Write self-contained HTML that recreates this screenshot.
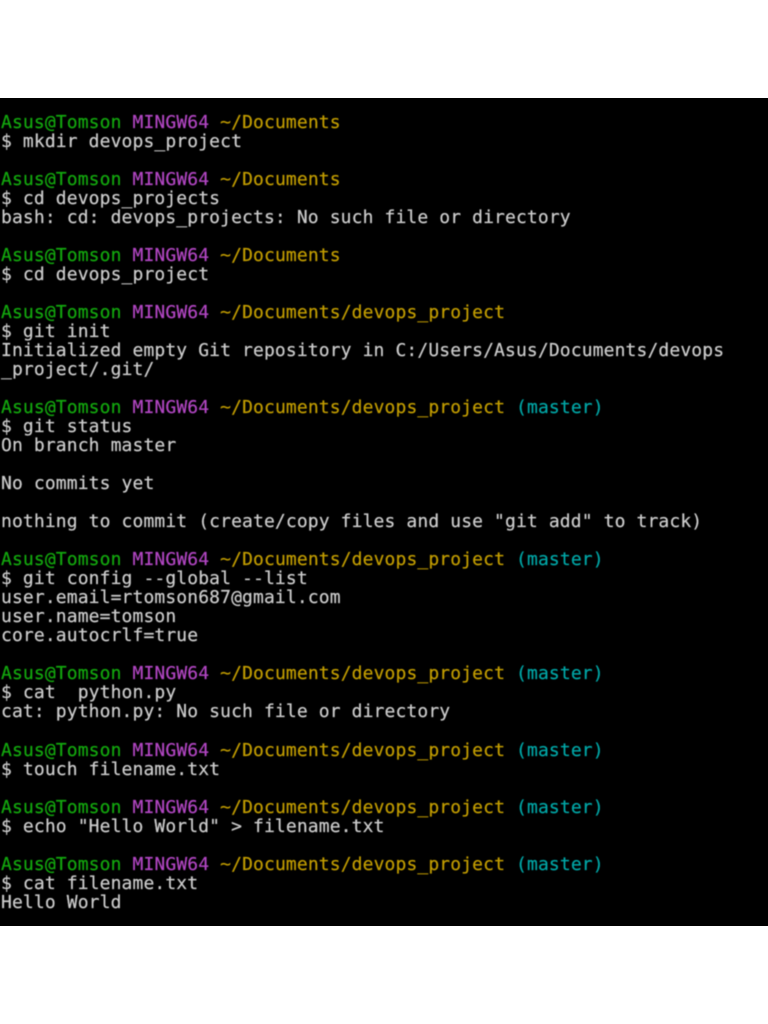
<!DOCTYPE html>
<html>
<head>
<meta charset="utf-8">
<style>
html,body{margin:0;padding:0;background:#fff;width:768px;height:1024px;overflow:hidden}
#t{position:absolute;left:0;top:98px;width:768px;height:828px;background:#000;overflow:hidden}
pre{position:absolute;left:1px;top:14.5px;margin:0;font-family:"DejaVu Sans Mono","Liberation Mono",monospace;font-size:18px;letter-spacing:.12px;line-height:19.03px;color:#cccccc;-webkit-text-stroke:.2px currentColor;filter:blur(.4px);font-variant-ligatures:none}
.g{color:#13a80e}.p{color:#b146c2}.y{color:#c19c00}.c{color:#00a6a6}
</style>
</head>
<body>
<div id="t"><pre><span class="g">Asus@Tomson</span> <span class="p">MINGW64</span> <span class="y">~/Documents</span>
$ mkdir devops_project

<span class="g">Asus@Tomson</span> <span class="p">MINGW64</span> <span class="y">~/Documents</span>
$ cd devops_projects
bash: cd: devops_projects: No such file or directory

<span class="g">Asus@Tomson</span> <span class="p">MINGW64</span> <span class="y">~/Documents</span>
$ cd devops_project

<span class="g">Asus@Tomson</span> <span class="p">MINGW64</span> <span class="y">~/Documents/devops_project</span>
$ git init
Initialized empty Git repository in C:/Users/Asus/Documents/devops
_project/.git/

<span class="g">Asus@Tomson</span> <span class="p">MINGW64</span> <span class="y">~/Documents/devops_project</span> <span class="c">(master)</span>
$ git status
On branch master

No commits yet

nothing to commit (create/copy files and use "git add" to track)

<span class="g">Asus@Tomson</span> <span class="p">MINGW64</span> <span class="y">~/Documents/devops_project</span> <span class="c">(master)</span>
$ git config --global --list
user.email=rtomson687@gmail.com
user.name=tomson
core.autocrlf=true

<span class="g">Asus@Tomson</span> <span class="p">MINGW64</span> <span class="y">~/Documents/devops_project</span> <span class="c">(master)</span>
$ cat  python.py
cat: python.py: No such file or directory

<span class="g">Asus@Tomson</span> <span class="p">MINGW64</span> <span class="y">~/Documents/devops_project</span> <span class="c">(master)</span>
$ touch filename.txt

<span class="g">Asus@Tomson</span> <span class="p">MINGW64</span> <span class="y">~/Documents/devops_project</span> <span class="c">(master)</span>
$ echo "Hello World" &gt; filename.txt

<span class="g">Asus@Tomson</span> <span class="p">MINGW64</span> <span class="y">~/Documents/devops_project</span> <span class="c">(master)</span>
$ cat filename.txt
Hello World</pre></div>
</body>
</html>
